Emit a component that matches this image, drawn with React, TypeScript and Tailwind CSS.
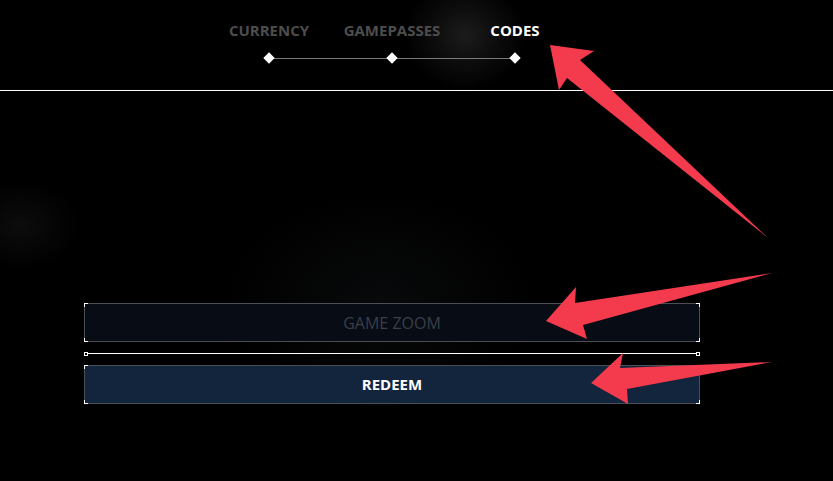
import React from 'react'

const tabs = [
  { label: 'CURRENCY', active: false },
  { label: 'GAMEPASSES', active: false },
  { label: 'CODES', active: true },
]

const Corners = () => (
  <>
    <span className="absolute -left-px -top-px w-1 h-1 border-t border-l border-white" />
    <span className="absolute -right-px -top-px w-1 h-1 border-t border-r border-white" />
    <span className="absolute -left-px -bottom-px w-1 h-1 border-b border-l border-white" />
    <span className="absolute -right-px -bottom-px w-1 h-1 border-b border-r border-white" />
  </>
)

const Arrows = () => (
  <svg className="absolute inset-0 pointer-events-none" width="833" height="481" viewBox="0 0 833 481">
    <polygon fill="#f43b4d" points="550,45 594,51 580,60 768,238 567,78 559,90" />
    <polygon fill="#f43b4d" points="546,321 576,287 575,303 772,273 583,325 587,339" />
    <polygon fill="#f43b4d" points="591,383 623,353 620,368 772,362 627,389 628,404" />
  </svg>
)

export default function App() {
  return (
    <div
      className="relative w-[833px] h-[481px] overflow-hidden bg-black
      bg-[radial-gradient(ellipse_60px_55px_at_465px_35px,#1c1c1c_0%,#0d0d0d_50%,transparent_100%),radial-gradient(ellipse_60px_45px_at_20px_225px,#0c0c0c,transparent),radial-gradient(ellipse_160px_110px_at_380px_300px,#08090a,transparent)]"
      style={{ fontFamily: '"Open Sans", "Noto Sans", sans-serif' }}
    >
      <div className="w-[616px] ml-[84px]">
        <div className="flex justify-center pt-[20px]">
          {tabs.map((t) => (
            <div
              key={t.label}
              className={`w-[123px] text-center text-[15px] leading-[21px] font-bold ${
                t.active ? 'text-white' : 'text-[#4d4d4d]'
              }`}
            >
              {t.label}
            </div>
          ))}
        </div>
        <div className="relative mx-auto mt-[12px] w-[246px] h-[10px] flex items-center justify-between">
          <div className="absolute left-0 right-0 top-1/2 h-px bg-[#7a7a7a]" />
          {tabs.map((t) => (
            <span key={t.label} className="relative w-[8px] h-[8px] rotate-45 bg-white -mx-[4px]" />
          ))}
        </div>
      </div>

      <div className="mt-[27px] h-px bg-white" />

      <div className="w-[616px] ml-[84px] mt-[212px]">
        <div className="relative h-[39px] border border-[#4a4e55] bg-[#080c14] flex items-center justify-center">
          <Corners />
          <span className="text-[16px] text-[#3a3f48]">GAME ZOOM</span>
        </div>

        <div className="relative my-[10px] h-[3px] flex items-center">
          <span className="w-[4px] h-[4px] border border-white shrink-0" />
          <div className="flex-1 h-px bg-white" />
          <span className="w-[4px] h-[4px] border border-white shrink-0" />
        </div>

        <div className="relative h-[39px] border border-[#4a4e55] bg-[#13243d] flex items-center justify-center">
          <Corners />
          <span className="text-[15px] font-bold text-white">REDEEM</span>
        </div>
      </div>

      <Arrows />
    </div>
  )
}
